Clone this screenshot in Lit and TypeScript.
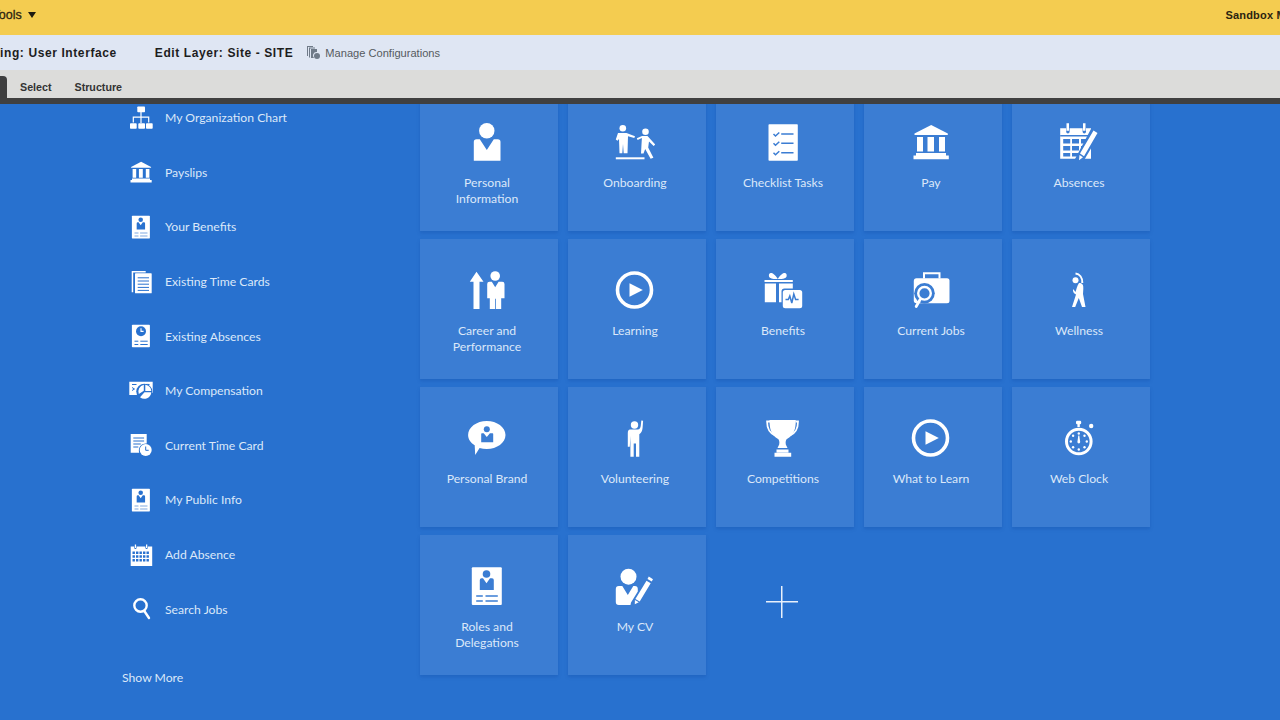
import { LitElement, html, css, svg } from "lit";
import { customElement } from "lit/decorators.js";

// icons are drawn in a 40x40 box for the tiles, 24x24 for the side list
const bank = svg`<path d="M20.2 3 3.500 11.500V13h33.300v-1.500z"/><path d="M6 15h6v14.500H6zM16.500 15h6.500v14.500h-6.500zM28 15h6v14.500h-6z"/><path d="M5 31h30v2.500H5zM2.500 33.500h35.300v3.800H2.500z"/>`;

const personCard = svg`<rect x="4.800" y="1.300" width="30" height="37.700" rx="1"/><circle class="cut" cx="19.500" cy="8" r="3.800"/><path class="cut" d="M12.800 14q0-1.800 1.800-1.800h1.400l3.500 5 3.500-5h2q1.800 0 1.800 1.800v10H12.800z"/><path class="cut-line" d="M9.200 30h6.600M18.500 30h12.300M9.200 35h6.600M18.500 35h12.300"/>`;

const play = svg`<circle class="line" cx="19.500" cy="20" r="17" stroke-width="3.600"/><path d="M14.500 13.300 27.800 20l-13.300 6.700z"/>`;

const icons: Record<string, unknown> = {
  person: svg`<circle cx="19.800" cy="8.700" r="7.700"/><path d="M6.800 20q0-2.700 2.700-2.700h3.300l7 10.700 7-10.700h4q2.700 0 2.700 2.700v18.700H6.800z"/>`,
  onboarding: svg`<circle cx="7.800" cy="6.300" r="3.300"/><path d="M3 11h8.500l8.500 3.200-.7 1.800-6.300-1.700-.5 17H8.700L8 22l-.7 9.300H4.500L4 17l-1.500 1.800L.8 17.500z"/><circle cx="30.500" cy="9.700" r="3.300"/><path d="M27 14h5.500l7.800 8.500-1.700 1.400-4.600-4.400-.8 6 5.200 10.200-2.800 1-5.400-9.700-1.700 4.500H26l.5-9 .4-6.500-4.300 2-.8-1.800z"/><path d="M.8 35.300h28.700v2H.8z"/>`,
  checklist: svg`<rect x="5.500" y="2.300" width="29.300" height="36.400" rx=".8"/><path class="cut-line" d="M10.500 12l2 2 3.800-3.500M18.200 12h12.300M10.500 21.300l2 2 3.800-3.500M18.200 21.300h12.300M10.500 30.700l2 2 3.800-3.500M18.200 30.700h12.300"/>`,
  bank,
  absences: svg`<path d="M1.200 6.300h6v3.500a1.700 1.700 0 0 0 3.400 0V6.300h13v3.500a1.700 1.700 0 0 0 3.400 0V6.300H32v30.400H1.200z"/><path d="M7.500 1.300h2.500v7.500H7.500zM24 1.300h2.500v7.500H24z"/><path class="cut" d="M1.200 13h30.800v1.600H1.200zM4.200 17h7v4.500h-7zM13 17h7v4.500h-7zM22 17h7v4.500h-7zM4.200 24h7v4.500h-7zM13 24h7v4.500h-7zM22 24h7v4.500h-7zM4.200 31h7v3.500h-7zM13 31h7v3.500h-7z"/><path class="cut" d="M33 5 41 11 24 40l-8-3z"/><path d="M34.500 8.400 38.500 11 25 34.200l-4-2.600zM20.500 33l3.500 2.200-4 3z"/>`,
  career: svg`<path d="M9.500 1.700 2.800 11.700h3.700V39h6V11.700h4z"/><circle cx="28.200" cy="6" r="4.800"/><path d="M20.200 14q0-2.300 2.300-2.300h2.300l3.400 5.500 3.400-5.500h3.600q2.300 0 2.300 2.300v14.300h-3.300V39h-5.300V28.800h-.8V39h-5.300V28.300h-2.600z"/>`,
  play,
  benefits: svg`<path d="M14.800 9C10 1 5 2 6 6.500c.6 2 4.500 2.700 8.800 2.500zm0 0c4.800-8 9.800-7 8.800-2.500-.6 2-4.500 2.700-8.800 2.500z"/><path d="M1.500 10h28.300v2H1.500z"/><path d="M1.800 13.500h11.200v18.800H1.800zM16 13.500h13.800v5H21.500q-3 0-3 3v10.800H16z"/><rect x="19.800" y="20" width="19.400" height="18.300" rx="2.500"/><path class="cut-line" d="M22.500 29.500h2.800l1.500-3.500 2 7 2-9 1.800 5.500h3"/>`,
  jobs: svg`<path class="line" stroke-width="2" d="M13 8.500V3.300h15.500v5.200"/><path d="M5.500 8.300h30.500q2.500 0 2.500 2.500v20q0 2.500-2.500 2.500H5.500q-2.700 0-2.700-2.700V11q0-2.700 2.700-2.700z"/><circle class="cut" cx="13.500" cy="23.300" r="10.300"/><circle class="line" cx="13.500" cy="23.300" r="6.300" stroke-width="2.400"/><path class="line" stroke-width="2.800" stroke-linecap="round" d="M9 29.800 5.200 36.500"/>`,
  wellness: svg`<circle cx="16.500" cy="10.300" r="3"/><path class="line" stroke-width="2" d="M16.500 3.500c4 .5 7 4 6.800 9.500"/><path d="M20 13c4 0 4.500 2.500 4.300 6l-.3 5 2.500 13h-3.500l-3.200-9-3.600 9H13l4-12.500c-2.500-1-3.500-3-2.800-5.500l2.300 3c1-3 1.500-6 3.500-9z"/>`,
  brand: svg`<path d="M19.800 3C30 3 38.500 9.300 38.500 17S30 31 19.800 31c-2.600 0-5-.4-7.200-1.100L8.200 37l-.5-9.700C3.600 24.800 1.100 21.100 1.100 17 1.100 9.300 9.600 3 19.800 3z"/><circle class="cut" cx="19.800" cy="11.300" r="3"/><path class="cut" d="M14.200 16q0-.7.7-.7h1.800l3.100 3.800 3.100-3.800h2.600q.7 0 .7.700v8.300H14.200z"/>`,
  volunteer: svg`<circle cx="19.500" cy="7" r="3.700"/><path d="M15 11.500h7.500c2.500 0 3-2 3.300-4l.5-5 1.800.3-.5 7c-.3 3-1 5-3.300 6.500V38.700h-3.300V25.500h-2.300v13.200h-3.300V18l-.6 10.700h-2L12.800 15q0-3.500 2.200-3.500z"/>`,
  trophy: svg`<path d="M6.500 2h26.300c0 9-1.800 15-8.500 18.800-1.500.8-2 3-1.500 5.700l1.700 3.500H14.500l1.700-3.500c.5-2.700 0-4.900-1.500-5.700C8.300 17 6.500 11 6.500 2z"/><path class="line" stroke-width="1.800" d="M7 3.500H4.100c0 8 2.500 11.500 8 14M32.500 3.500h2.500c0 8-2.500 11.500-8 14"/><path d="M13.500 31.500h12v3h-12zM11.500 34.800h16.700v3.900H11.500z"/>`,
  clock: svg`<rect x="17" y="2.800" width="5.200" height="3.400" rx="1.200"/><path d="M18.400 6h2.400v3h-2.400z"/><circle cx="32.200" cy="8" r="2.200"/><circle class="line" cx="19.800" cy="23.500" r="12.300" stroke-width="3"/><circle cx="19.800" cy="15.500" r="1.200"/><circle cx="25.500" cy="17.800" r="1.200"/><circle cx="27.800" cy="23.500" r="1.200"/><circle cx="25.500" cy="29.200" r="1.200"/><circle cx="19.800" cy="31.500" r="1.200"/><circle cx="14.100" cy="29.200" r="1.200"/><circle cx="11.800" cy="23.500" r="1.200"/><circle cx="14.100" cy="17.800" r="1.200"/><path d="M19.300 17.500h1l.9 6.600a1.400 1.400 0 1 1-2.800 0z"/>`,
  card: personCard,
  cv: svg`<circle cx="13.500" cy="10.700" r="8"/><path d="M.8 23q0-3 3-3h3.500l5.500 9 5.500-9h1.500q3 0 3 3v2.500L16 36.500l-.5 2.500H3.800q-3 0-3-3z"/><path class="cut" d="M33 8 40.500 12.500 25 41l-9-1z"/><path d="M33.800 10.600 38 13.200l-1.300 2.200-4.200-2.500zM31.500 14.700l4.200 2.500-11 18.300-4.300-2.500zM19.900 34l3.900 2.300-4 2z"/>`,
  org: svg`<rect x="8.300" y=".5" width="7.700" height="5.700" rx=".8"/><rect x="1" y="17.200" width="6.700" height="5.600" rx=".8"/><rect x="9.300" y="17.200" width="6.700" height="5.600" rx=".8"/><rect x="17" y="17.200" width="6.700" height="5.600" rx=".8"/><path class="line" stroke-width="1.200" d="M12 6v11M4.300 16.500v-5.300h15.400v5.300"/>`,
  cards: svg`<path d="M2.700 1h14v1.500H4.200v19.800H2.700z"/><rect x="6" y="3.300" width="16.700" height="20" rx=".6"/><path class="cut-line" d="M8.700 7.800H20M8.700 11H20M8.700 14.200H20M8.700 17.400H20M8.700 20.400H20"/>`,
  absCard: svg`<rect x="2.900" y=".8" width="18" height="22.500" rx=".8"/><circle class="cut" cx="12" cy="7.200" r="5"/><path class="line" stroke-width="1.100" d="M12 4.200v3.200h2.600"/><path class="cut-line" d="M5.500 17.200h3.800M11.300 17.200h7.400M5.500 20.500h3.800M11.300 20.500h7.400"/>`,
  comp: svg`<path d="M.3 2.700h23.400v11l-6-.5-4 2.800H.3z"/><path class="cut-line" d="M3 5.500h4.500M3 8.500l2.500 1.500L3 11.500M8 12.500c2-6 6-7.500 12.500-7M11 11c2-3 5-4 9.500-3.500M15 9.500l2-1"/><circle class="cut" cx="15.300" cy="12.700" r="8"/><path d="M14.800 5.700v6l-5 3.300a7 7 0 0 1 5-9.300zM16.300 5.700a7 7 0 0 1 6 6.200h-6zM15.500 13.300h6.800A7 7 0 0 1 11 18.300z"/>`,
  timeCard: svg`<path d="M1.700 1h16v9.500a7 7 0 0 0-7.500 9.200H1.700z"/><path class="cut-line" d="M4.300 5h10.800M4.300 8h10.800M4.300 11h7.500M4.300 14h5"/><circle cx="16.700" cy="17" r="6"/><path class="cut-line" d="M16.700 13.500V17.300h3"/>`,
  calendar: svg`<path d="M1.700 3.500h3.500v1.200a1.200 1.200 0 0 0 2.400 0V3.500h8.800v1.200a1.200 1.200 0 0 0 2.400 0V3.500h4.400V23H1.700z"/><path d="M5.800 1.500h1.300v3.500H5.800zM17 1.500h1.300v3.500H17z"/><path class="cut" d="M3.500 8.500h2.400v2.400H3.500zM7 8.500h2.400v2.400H7zM10.500 8.500h2.400v2.400h-2.400zM14 8.500h2.400v2.400H14zM17.500 8.500h2.400v2.400h-2.400zM3.500 12.300h2.400v2.400H3.500zM7 12.300h2.400v2.400H7zM10.500 12.300h2.400v2.400h-2.400zM14 12.300h2.400v2.400H14zM17.500 12.300h2.400v2.400h-2.400zM3.500 16.100h2.400v2.400H3.500zM7 16.100h2.400v2.400H7zM10.500 16.100h2.400v2.400h-2.400zM14 16.100h2.400v2.400H14zM17.500 16.100h2.400v2.400h-2.400z"/>`,
  search: svg`<circle class="line" cx="11.500" cy="8.500" r="6.200" stroke-width="2.400"/><path class="line" stroke-width="2.400" stroke-linecap="round" d="M15.300 14 20 21"/>`,
};

type Tile = { label: string[]; icon: string };

const tiles: Tile[] = [
  { label: ["Personal", "Information"], icon: "person" },
  { label: ["Onboarding"], icon: "onboarding" },
  { label: ["Checklist Tasks"], icon: "checklist" },
  { label: ["Pay"], icon: "bank" },
  { label: ["Absences"], icon: "absences" },
  { label: ["Career and", "Performance"], icon: "career" },
  { label: ["Learning"], icon: "play" },
  { label: ["Benefits"], icon: "benefits" },
  { label: ["Current Jobs"], icon: "jobs" },
  { label: ["Wellness"], icon: "wellness" },
  { label: ["Personal Brand"], icon: "brand" },
  { label: ["Volunteering"], icon: "volunteer" },
  { label: ["Competitions"], icon: "trophy" },
  { label: ["What to Learn"], icon: "play" },
  { label: ["Web Clock"], icon: "clock" },
  { label: ["Roles and", "Delegations"], icon: "card" },
  { label: ["My CV"], icon: "cv" },
];

// view box is 40 for the ones shared with the tiles
const links = [
  { label: "My Organization Chart", icon: "org", box: 24 },
  { label: "Payslips", icon: "bank", box: 40 },
  { label: "Your Benefits", icon: "card", box: 40 },
  { label: "Existing Time Cards", icon: "cards", box: 24 },
  { label: "Existing Absences", icon: "absCard", box: 24 },
  { label: "My Compensation", icon: "comp", box: 24 },
  { label: "Current Time Card", icon: "timeCard", box: 24 },
  { label: "My Public Info", icon: "card", box: 40 },
  { label: "Add Absence", icon: "calendar", box: 24 },
  { label: "Search Jobs", icon: "search", box: 24 },
];

@customElement("app-root")
export class AppRoot extends LitElement {
  static styles = css`
    :host {
      display: flex;
      flex-direction: column;
      width: 1280px;
      height: 720px;
      overflow: hidden;
      background: #2871cf;
      font-family: "Liberation Sans", Arial, sans-serif;
    }
    .tools {
      flex: none;
      height: 35px;
      box-sizing: border-box;
      display: flex;
      align-items: center;
      padding-bottom: 6px;
      background: #f4cc50;
      color: #2b2410;
      font-size: 11px;
      font-weight: bold;
      white-space: nowrap;
    }
    .tools-name {
      margin-left: -7.500px;
      font-weight: normal;
      -webkit-text-stroke: 0.3px #2b2410;
      font-size: 12.500px;
    }
    .caret {
      margin-left: 6px;
      border-left: 4.500px solid transparent;
      border-right: 4.500px solid transparent;
      border-top: 6px solid #1e1a10;
    }
    .sandbox {
      margin-left: auto;
      margin-right: -26px;
      letter-spacing: 0.2px;
    }
    .layer {
      flex: none;
      height: 35px;
      display: flex;
      align-items: center;
      background: #dfe6f3;
      color: #1d1d1d;
      font-size: 12px;
      font-weight: bold;
      letter-spacing: 0.6px;
      white-space: nowrap;
    }
    .editing {
      margin-left: -25px;
    }
    .edit-layer {
      margin-left: 38px;
    }
    .manage {
      display: flex;
      align-items: center;
      gap: 4px;
      margin-left: 13px;
      color: #555a60;
      font-size: 11.100px;
      font-weight: normal;
      letter-spacing: 0;
    }
    .manage svg {
      width: 15px;
      height: 15px;
      fill: #6f7a88;
    }
    .tabs {
      flex: none;
      height: 28px;
      display: flex;
      align-items: flex-end;
      background: #dcdcda;
      color: #333;
      font-size: 10.700px;
      font-weight: bold;
      white-space: nowrap;
    }
    .tab-on {
      width: 7px;
      height: 22px;
      border-top-right-radius: 4px;
      background: #3f3f3f;
    }
    .tab {
      height: 22px;
      line-height: 22px;
      margin-left: 23px;
    }
    .tab-on + .tab {
      margin-left: 13px;
    }
    .rule {
      flex: none;
      height: 6px;
      background: #404040;
    }
    .body {
      flex: 1;
      min-height: 0;
      overflow: hidden;
      font-family: Lato, "Open Sans", sans-serif;
      font-size: 12.200px;
      color: #dbe8f9;
    }
    .scrolled {
      display: flex;
      margin-top: -13px;
    }
    .side {
      flex: none;
      width: 420px;
      box-sizing: border-box;
      padding-left: 122px;
      margin-top: -0.500px;
      --cut: #2871cf;
    }
    .link {
      display: flex;
      align-items: center;
      gap: 12px;
      height: 54.600px;
      padding-left: 7px;
    }
    .link svg {
      flex: none;
      width: 24px;
      height: 24px;
    }
    .more {
      margin-top: 34px;
      line-height: 16px;
    }
    .grid {
      display: grid;
      grid-template-columns: repeat(5, 138px);
      grid-auto-rows: 140px;
      gap: 8px 10px;
    }
    .tile {
      box-sizing: border-box;
      padding: 31px 4px 0 0;
      display: flex;
      flex-direction: column;
      align-items: center;
      background: #3b7dd3;
      box-shadow: 0 2px 3px rgba(20, 80, 170, 0.35);
      line-height: 16px;
      text-align: center;
      --cut: #3b7dd3;
    }
    .tile svg {
      flex: none;
      width: 40px;
      height: 40px;
      margin-bottom: 13px;
    }
    svg {
      fill: #fff;
    }
    svg .cut {
      fill: var(--cut);
    }
    svg .cut-line {
      fill: none;
      stroke: var(--cut);
      stroke-width: 1.500;
    }
    .side svg .cut-line {
      stroke-width: 1;
    }
    svg .line {
      fill: none;
      stroke: #fff;
    }
    .add {
      display: flex;
      align-items: center;
      justify-content: center;
      padding: 0 6px 6px 0;
    }
    .plus {
      width: 32px;
      height: 32px;
      background:
        linear-gradient(#e8f0fb, #e8f0fb) center / 100% 1.500px no-repeat,
        linear-gradient(#e8f0fb, #e8f0fb) center / 1.500px 100% no-repeat;
    }
  `;

  private icon(name: string, box = 40) {
    return html`<svg viewBox="0 0 ${box} ${box}">${icons[name]}</svg>`;
  }

  render() {
    return html`
      <div class="tools">
        <span class="tools-name">Tools</span>
        <span class="caret"></span>
        <span class="sandbox">Sandbox Mode</span>
      </div>
      <div class="layer">
        <span class="editing">Editing: User Interface</span>
        <span class="edit-layer">Edit Layer: Site - SITE</span>
        <span class="manage">
          <svg viewBox="0 0 15 15">
            <path d="M1 1h6v1H2v9H1zM3 2.500h6v1H4v9H3z" />
            <path d="M5 4h6v3a3.500 3.500 0 0 0-3 6H5z" />
            <circle cx="11" cy="11" r="3" />
          </svg>
          Manage Configurations
        </span>
      </div>
      <div class="tabs">
        <span class="tab-on"></span>
        <span class="tab">Select</span>
        <span class="tab">Structure</span>
      </div>
      <div class="rule"></div>
      <div class="body">
        <div class="scrolled">
          <nav class="side">
            ${links.map(
              (l) => html`<div class="link">${this.icon(l.icon, l.box)}<span>${l.label}</span></div>`
            )}
            <div class="more">Show More</div>
          </nav>
          <div class="grid">
            ${tiles.map(
              (t) => html`<div class="tile">
                ${this.icon(t.icon)}
                ${t.label.map((line) => html`<span>${line}</span>`)}
              </div>`
            )}
            <div class="add"><div class="plus"></div></div>
          </div>
        </div>
      </div>
    `;
  }
}
